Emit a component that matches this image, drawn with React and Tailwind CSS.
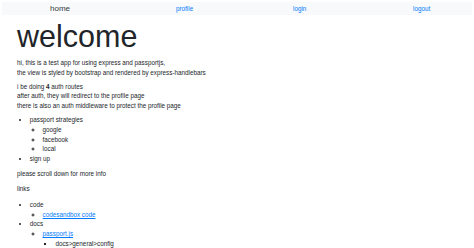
import React from "react";

function Nav() {
  return (
    <nav className="mx-[2px] mt-[2px] h-[13px] bg-[#f8f9fa] grid grid-cols-[174px_117px_120px_1fr] items-center">
      <a href="#" className="pl-[48px] text-[8px] text-[#343a40]">
        home
      </a>
      <a href="#" className="text-[#007bff]">
        profile
      </a>
      <a href="#" className="text-[#007bff]">
        login
      </a>
      <a href="#" className="text-[#007bff]">
        logout
      </a>
    </nav>
  );
}

export default function App() {
  return (
    <div className="font-['Liberation_Sans',Arial,sans-serif] text-[#212529] text-[6.3px] leading-[9.7px] bg-white min-h-screen">
      <Nav />
      <main className="px-[17px]">
        <h1 className="text-[30.5px] leading-[36px] mt-[3px] mb-[4px] font-normal text-[#212529]">
          welcome
        </h1>
        <p className="mb-[4.3px]">
          hi, this is a test app for using express and passportjs,
          <br />
          the view is styled by bootstrap and rendered by express-handlebars
        </p>
        <p className="mb-[4.3px]">
          i be doing <b>4</b> auth routes
          <br />
          after auth, they will redirect to the profile page
          <br />
          there is also an auth middleware to protect the profile page
        </p>
        <ul className="list-disc pl-[12.8px] mb-[5.3px]">
          <li>
            passport strategies
            <ul className="list-[circle] pl-[12.8px]">
              <li>google</li>
              <li>facebook</li>
              <li>local</li>
            </ul>
          </li>
          <li>sign up</li>
        </ul>
        <p className="mb-[5.3px]">please scroll down for more info</p>
        <p className="mb-[6.3px]">links</p>
        <ul className="list-disc pl-[12.8px]">
          <li>
            code
            <ul className="list-[circle] pl-[12.8px]">
              <li>
                <a href="#" className="text-[#007bff] underline">
                  codesandbox code
                </a>
              </li>
            </ul>
          </li>
          <li>
            docs
            <ul className="list-[circle] pl-[12.8px]">
              <li>
                <a href="#" className="text-[#007bff] underline">
                  passport.js
                </a>
                <ul className="list-[square] pl-[12.8px]">
                  <li>docs&gt;general&gt;config</li>
                </ul>
              </li>
            </ul>
          </li>
        </ul>
      </main>
    </div>
  );
}
